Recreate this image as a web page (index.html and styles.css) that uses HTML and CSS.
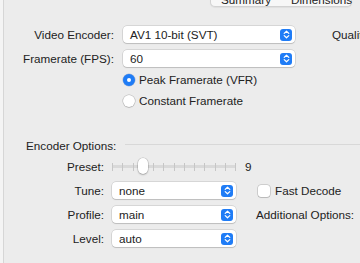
FILE: index.html
```html
<!DOCTYPE html>
<html lang="en">
    <head>
        <meta charset="UTF-8">
        <title>Video settings</title>
        <link rel="stylesheet" href="styles.css">
    </head>

    <body class="window">
        <div class="tabs">
            <span class="tabs__item">Summary</span>
            <span class="tabs__sep"></span>
            <span class="tabs__item">Dimensions</span>
        </div>

        <section class="panel">
            <div class="video">
                <span class="video__label">Video Encoder:</span>
                <div class="popup popup--wide">
                    <span class="popup__value">AV1 10-bit (SVT)</span>
                    <span class="popup__arrows"><svg width="7" height="9" viewBox="0 0 7 9"><path d="M1.2 3.4 L3.5 1.2 L5.8 3.4 M1.2 5.6 L3.5 7.8 L5.8 5.6" fill="none" stroke="#fff" stroke-width="1.2" stroke-linecap="round" stroke-linejoin="round"/></svg></span>
                </div>
                <span class="video__side">Quality:</span>

                <span class="video__label">Framerate (FPS):</span>
                <div class="popup popup--wide">
                    <span class="popup__value">60</span>
                    <span class="popup__arrows"><svg width="7" height="9" viewBox="0 0 7 9"><path d="M1.2 3.4 L3.5 1.2 L5.8 3.4 M1.2 5.6 L3.5 7.8 L5.8 5.6" fill="none" stroke="#fff" stroke-width="1.2" stroke-linecap="round" stroke-linejoin="round"/></svg></span>
                </div>
                <span></span>

                <span></span>
                <div class="radios">
                    <label class="radio"><span class="radio__dot radio__dot--on"></span>Peak Framerate (VFR)</label>
                    <label class="radio"><span class="radio__dot"></span>Constant Framerate</label>
                </div>
                <span></span>
            </div>

            <div class="options">
                <div class="options__title">
                    <span>Encoder Options:</span>
                    <span class="options__rule"></span>
                </div>

                <div class="options__grid">
                    <span class="options__label">Preset:</span>
                    <div class="slider">
                        <div class="slider__track">
                            <span class="slider__tick"></span><span class="slider__tick"></span><span class="slider__tick"></span>
                            <span class="slider__tick"></span><span class="slider__tick"></span><span class="slider__tick"></span>
                            <span class="slider__tick"></span><span class="slider__tick"></span><span class="slider__tick"></span>
                            <span class="slider__tick"></span><span class="slider__tick"></span><span class="slider__tick"></span>
                            <span class="slider__tick"></span>
                        </div>
                        <span class="slider__knob"></span>
                    </div>
                    <span class="slider__value">9</span>

                    <span class="options__label">Tune:</span>
                    <div class="popup">
                        <span class="popup__value">none</span>
                        <span class="popup__arrows"><svg width="7" height="9" viewBox="0 0 7 9"><path d="M1.2 3.4 L3.5 1.2 L5.8 3.4 M1.2 5.6 L3.5 7.8 L5.8 5.6" fill="none" stroke="#fff" stroke-width="1.2" stroke-linecap="round" stroke-linejoin="round"/></svg></span>
                    </div>
                    <label class="check"><span class="check__box"></span>Fast Decode</label>

                    <span class="options__label">Profile:</span>
                    <div class="popup">
                        <span class="popup__value">main</span>
                        <span class="popup__arrows"><svg width="7" height="9" viewBox="0 0 7 9"><path d="M1.2 3.4 L3.5 1.2 L5.8 3.4 M1.2 5.6 L3.5 7.8 L5.8 5.6" fill="none" stroke="#fff" stroke-width="1.2" stroke-linecap="round" stroke-linejoin="round"/></svg></span>
                    </div>
                    <span class="options__extra">Additional Options:</span>

                    <span class="options__label">Level:</span>
                    <div class="popup">
                        <span class="popup__value">auto</span>
                        <span class="popup__arrows"><svg width="7" height="9" viewBox="0 0 7 9"><path d="M1.2 3.4 L3.5 1.2 L5.8 3.4 M1.2 5.6 L3.5 7.8 L5.8 5.6" fill="none" stroke="#fff" stroke-width="1.2" stroke-linecap="round" stroke-linejoin="round"/></svg></span>
                    </div>
                    <span></span>
                </div>
            </div>
        </section>
    </body>
</html>
```

FILE: styles.css
```css
html,
body {
    margin: 0;
    padding: 0;
    height: 100%;
}

:root {
    --color-page: #f4f4f4;
    --color-panel: #ececec;
    --color-panel-border: #d6d6d6;
    --color-text: #222222;
    --color-accent: #1f7cf6;
}

.window {
    background-color: var(--color-page);
    color: var(--color-text);
    font-family: "Liberation Sans", Arial, sans-serif;
    font-size: 11.7px;
    overflow: hidden;
    padding-left: 3px;
    position: relative;
    box-sizing: border-box;
}

.tabs {
    align-items: center;
    background-color: #f7f7f7;
    border: 1px solid #d2d2d2;
    border-radius: 0 0 5px 5px;
    border-top: none;
    box-shadow: 0 1px 1px rgba(0, 0, 0, 0.06);
    display: flex;
    height: 14px;
    left: 210px;
    position: absolute;
    top: -7px;
    padding: 0 10px;
    width: 142px;
    box-sizing: border-box;
    gap: 10px;
}

.tabs__sep {
    background-color: #cfcfcf;
    height: 10px;
    width: 1px;
}

.panel {
    background-color: var(--color-panel);
    border-left: 1px solid var(--color-panel-border);
    height: 100%;
    padding-top: 26px;
    box-sizing: border-box;
}

.video {
    display: grid;
    grid-template-columns: 110px 172px auto;
    column-gap: 9px;
    row-gap: 7px;
    align-items: center;
}

.video__label {
    text-align: right;
}

.video__side {
    padding-left: 28px;
    white-space: nowrap;
}

.popup {
    align-items: center;
    background-color: #fff;
    border-radius: 4px;
    box-shadow: 0 0 0 0.5px rgba(0, 0, 0, 0.18), 0 1px 1px rgba(0, 0, 0, 0.12);
    display: flex;
    height: 17px;
    justify-content: space-between;
    padding: 0 3px 0 7px;
    box-sizing: border-box;
}

.popup__arrows {
    align-items: center;
    background-color: var(--color-accent);
    border-radius: 3px;
    display: flex;
    height: 12px;
    justify-content: center;
    width: 12px;
}

.radios {
    display: flex;
    flex-direction: column;
    gap: 8px;
    margin-top: -1px;
}

.radio {
    align-items: center;
    display: flex;
    gap: 4px;
    height: 13px;
}

.radio__dot {
    background-color: #fff;
    border-radius: 50%;
    box-shadow: 0 0 0 0.5px rgba(0, 0, 0, 0.25), 0 1px 1px rgba(0, 0, 0, 0.1);
    height: 12px;
    width: 12px;
    box-sizing: border-box;
}

.radio__dot--on {
    border: 4px solid var(--color-accent);
    box-shadow: 0 0 0 0.5px rgba(0, 60, 160, 0.3);
}

.options {
    padding-top: 32px;
}

.options__title {
    align-items: center;
    display: flex;
    gap: 9px;
    padding-left: 22px;
}

.options__rule {
    background-color: #d8d8d8;
    flex: 1;
    height: 1px;
    margin-top: -2px;
}

.options__grid {
    display: grid;
    grid-template-columns: 100px 124px auto;
    column-gap: 8px;
    row-gap: 7px;
    align-items: center;
    margin-top: 6px;
}

.options__label {
    text-align: right;
}

.options__extra {
    padding-left: 12px;
    white-space: nowrap;
}

.slider {
    height: 17px;
    position: relative;
    display: flex;
    align-items: center;
}

.slider__track {
    align-items: center;
    background-color: #d9d9d9;
    display: flex;
    height: 3px;
    justify-content: space-between;
    width: 100%;
}

.slider__tick {
    background-color: #c6c6c6;
    height: 8px;
    width: 1px;
}

.slider__knob {
    background-color: #fff;
    border-radius: 5px;
    box-shadow: 0 0 0 0.5px rgba(0, 0, 0, 0.2), 0 1px 2px rgba(0, 0, 0, 0.2);
    height: 16px;
    left: 26px;
    position: absolute;
    top: 0;
    width: 10px;
}

.slider__value {
    padding-left: 1px;
}

.check {
    align-items: center;
    display: flex;
    gap: 5px;
    padding-left: 14px;
}

.check__box {
    background-color: #fff;
    border-radius: 3px;
    box-shadow: 0 0 0 0.5px rgba(0, 0, 0, 0.25), 0 1px 1px rgba(0, 0, 0, 0.1);
    height: 12px;
    width: 12px;
}
```
